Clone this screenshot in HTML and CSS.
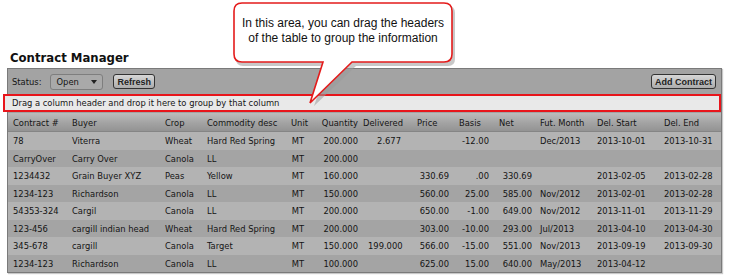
FILE: index.html
```html
<!DOCTYPE html>
<html lang="en">
<head>
    <meta charset="UTF-8">
    <title>Contract Manager</title>
    <link rel="stylesheet" href="styles.css">
</head>
<body>

<div class="callout">
    <svg class="callout-shape" width="230" height="110" viewBox="0 0 230 110">
        <path d="M 17 6 H 222 Q 229 6 229 13 V 59 Q 229 66 222 66 H 130 L 88 106 L 102 66 H 17 Q 10 66 10 59 V 13 Q 10 6 17 6 Z" fill="#9a9a9a" opacity="0.55"/>
        <path d="M 16 3 H 218 Q 226 3 226 11 V 54 Q 226 62 218 62 H 126 L 84 103 L 97 62 H 16 Q 8 62 8 54 V 11 Q 8 3 16 3 Z" fill="#ffffff" stroke="#e41b1b" stroke-width="1.6"/>
    </svg>
    <div class="callout-text">In this area, you can drag the headers<br>of the table to group the information</div>
</div>

<h1 class="title">Contract Manager</h1>

<div class="panel">
    <div class="toolbar">
        <span class="label">Status:</span>
        <span class="select">Open <span class="arrow"></span></span>
        <button class="btn">Refresh</button>
        <span class="spacer"></span>
        <button class="btn">Add Contract</button>
    </div>
    <div class="group-bar">Drag a column header and drop it here to group by that column</div>
    <table class="grid">
        <colgroup>
            <col style="width:59px"><col style="width:93px"><col style="width:42px"><col style="width:84px">
            <col style="width:23px"><col style="width:54px"><col style="width:43px"><col style="width:48px">
            <col style="width:40px"><col style="width:43px"><col style="width:55px"><col style="width:67px">
            <col style="width:62px">
        </colgroup>
        <thead>
            <tr>
                <th>Contract #</th>
                <th>Buyer</th>
                <th>Crop</th>
                <th>Commodity desc</th>
                <th class="r">Unit</th>
                <th class="r">Quantity</th>
                <th class="r delivered">Delivered</th>
                <th class="price">Price</th>
                <th>Basis</th>
                <th>Net</th>
                <th class="tight">Fut. Month</th>
                <th>Del. Start</th>
                <th>Del. End</th>
            </tr>
        </thead>
        <tbody>
            <tr>
                <td>78</td><td>Viterra</td><td>Wheat</td><td>Hard Red Spring</td><td class="r">MT</td><td class="r">200.000</td><td class="r">2.677</td><td class="r"></td><td class="r">-12.00</td><td class="r"></td><td class="tight">Dec/2013</td><td>2013-10-01</td><td>2013-10-31</td>
            </tr>
            <tr>
                <td>CarryOver</td><td>Carry Over</td><td>Canola</td><td>LL</td><td class="r">MT</td><td class="r">200.000</td><td class="r"></td><td class="r"></td><td class="r"></td><td class="r"></td><td class="tight"></td><td></td><td></td>
            </tr>
            <tr>
                <td>1234432</td><td>Grain Buyer XYZ</td><td>Peas</td><td>Yellow</td><td class="r">MT</td><td class="r">160.000</td><td class="r"></td><td class="r">330.69</td><td class="r">.00</td><td class="r">330.69</td><td class="tight"></td><td>2013-02-05</td><td>2013-02-28</td>
            </tr>
            <tr>
                <td>1234-123</td><td>Richardson</td><td>Canola</td><td>LL</td><td class="r">MT</td><td class="r">150.000</td><td class="r"></td><td class="r">560.00</td><td class="r">25.00</td><td class="r">585.00</td><td class="tight">Nov/2012</td><td>2013-02-01</td><td>2013-02-28</td>
            </tr>
            <tr>
                <td>54353-324</td><td>Cargil</td><td>Canola</td><td>LL</td><td class="r">MT</td><td class="r">200.000</td><td class="r"></td><td class="r">650.00</td><td class="r">-1.00</td><td class="r">649.00</td><td class="tight">Nov/2012</td><td>2013-11-01</td><td>2013-11-29</td>
            </tr>
            <tr>
                <td>123-456</td><td>cargill indian head</td><td>Wheat</td><td>Hard Red Spring</td><td class="r">MT</td><td class="r">200.000</td><td class="r"></td><td class="r">303.00</td><td class="r">-10.00</td><td class="r">293.00</td><td class="tight">Jul/2013</td><td>2013-04-10</td><td>2013-04-30</td>
            </tr>
            <tr>
                <td>345-678</td><td>cargill</td><td>Canola</td><td>Target</td><td class="r">MT</td><td class="r">150.000</td><td class="r">199.000</td><td class="r">566.00</td><td class="r">-15.00</td><td class="r">551.00</td><td class="tight">Nov/2013</td><td>2013-09-19</td><td>2013-09-30</td>
            </tr>
            <tr>
                <td>1234-123</td><td>Richardson</td><td>Canola</td><td>LL</td><td class="r">MT</td><td class="r">100.000</td><td class="r"></td><td class="r">625.00</td><td class="r">15.00</td><td class="r">640.00</td><td class="tight">May/2013</td><td>2013-04-12</td><td></td>
            </tr>
        </tbody>
    </table>
</div>

</body>
</html>
```

FILE: styles.css
```css
body {
    margin: 0;
    background-color: #ffffff;
    font-family: "DejaVu Sans Condensed", "DejaVu Sans", sans-serif;
    color: #141414;
    position: relative;
    width: 730px;
    height: 280px;
    overflow: hidden;
}
.callout {
    position: absolute;
    left: 226px;
    top: 0;
    width: 230px;
    height: 110px;
    z-index: 2;
}
.callout-shape {
    position: absolute;
    left: 0;
    top: 0;
}
.callout-text {
    position: absolute;
    left: 8px;
    top: 16px;
    width: 218px;
    text-align: center;
    font-family: "Liberation Sans", Arial, sans-serif;
    font-size: 12px;
    line-height: 15px;
    color: #111;
}
.title {
    margin: 0;
    padding: 49px 0 0 10px;
    font-size: 13px;
    line-height: 18px;
    font-weight: bold;
    color: #111;
}
.panel {
    margin: 1px 0 0 7px;
    width: 713px;
    background-color: #a3a3a3;
    border: 1px solid #7a7a7a;
    box-shadow: 1px 1px 1px #c8c8c8;
}
.toolbar {
    display: flex;
    align-items: center;
    height: 25px;
    padding: 0 5px 0 4px;
    font-size: 9.3px;
}
.label {
    margin-right: 9px;
}
.select {
    display: flex;
    align-items: center;
    justify-content: space-between;
    box-sizing: border-box;
    width: 53px;
    height: 16px;
    padding: 0 5px 0 5px;
    border: 1px solid #7e7e7e;
    border-radius: 3px;
    background-color: #a9a9a9;
    margin-right: 10px;
}
.arrow {
    width: 0;
    height: 0;
    border-left: 3px solid transparent;
    border-right: 3px solid transparent;
    border-top: 4px solid #222;
}
.btn {
    box-sizing: border-box;
    height: 15px;
    padding: 0 3px;
    font-family: "Liberation Sans", Arial, sans-serif;
    font-size: 9px;
    font-weight: bold;
    color: #222;
    border: 1px solid #333;
    border-radius: 3px;
    background: linear-gradient(#d6d6d6, #acacac);
}
.spacer {
    flex: 1;
}
.group-bar {
    margin: 0 0 1px -5px;
    height: 14px;
    line-height: 14px;
    padding-left: 7px;
    background-color: #e9e9e9;
    border: 2px solid #e8151b;
    font-size: 9.3px;
}
.grid {
    width: 713px;
    border-collapse: collapse;
    table-layout: fixed;
    font-size: 9.3px;
}
.grid th,
.grid td {
    padding: 0 5px;
    text-align: left;
    white-space: nowrap;
    overflow: hidden;
}
.grid th {
    height: 18px;
    font-weight: normal;
    overflow: visible;
    background: linear-gradient(#bcbcbc, #a3a3a3 55%, #939393);
    border-bottom: 1px solid #858585;
}
.grid td {
    height: 17.5px;
}
.grid tbody tr:nth-child(odd) {
    background-color: #b3b3b3;
}
.grid tbody tr:nth-child(even) {
    background-color: #a4a4a4;
}
.grid .r {
    text-align: right;
}
.grid .delivered {
    padding: 0 4px 0 0;
}
.grid .price {
    padding-left: 11px;
}
.grid .tight {
    padding-left: 3px;
}
```
